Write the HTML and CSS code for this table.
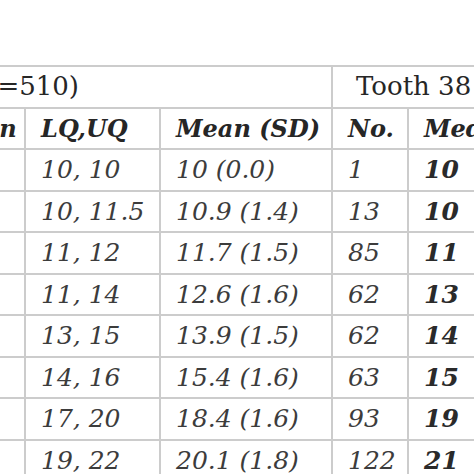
FILE: index.html
```html
<!DOCTYPE html>
<html lang="en">
<head>
<meta charset="utf-8">
<title>Tooth table</title>
<link rel="stylesheet" href="styles.css">
</head>
<body>
<div class="frame">
<table class="stats">
  <colgroup>
    <col class="c-med-l">
    <col class="c-lq">
    <col class="c-mean">
    <col class="c-no">
    <col class="c-med-r">
  </colgroup>
  <thead>
    <tr class="group">
      <th colspan="3" class="g-left">(n=510)</th>
      <th colspan="2" class="g-right">Tooth 38</th>
    </tr>
    <tr class="heads">
      <th class="h-first">Median</th>
      <th>LQ,UQ</th>
      <th>Mean (SD)</th>
      <th>No.</th>
      <th>Median</th>
    </tr>
  </thead>
  <tbody>
    <tr><td></td><td>10, 10</td><td>10 (0.0)</td><td>1</td><td class="b">10</td></tr>
    <tr><td></td><td>10, 11.5</td><td>10.9 (1.4)</td><td>13</td><td class="b">10</td></tr>
    <tr><td></td><td>11, 12</td><td>11.7 (1.5)</td><td>85</td><td class="b">11</td></tr>
    <tr><td></td><td>11, 14</td><td>12.6 (1.6)</td><td>62</td><td class="b">13</td></tr>
    <tr><td></td><td>13, 15</td><td>13.9 (1.5)</td><td>62</td><td class="b">14</td></tr>
    <tr><td></td><td>14, 16</td><td>15.4 (1.6)</td><td>63</td><td class="b">15</td></tr>
    <tr><td></td><td>17, 20</td><td>18.4 (1.6)</td><td>93</td><td class="b">19</td></tr>
    <tr><td></td><td>19, 22</td><td>20.1 (1.8)</td><td>122</td><td class="b">21</td></tr>
  </tbody>
</table>
</div>
</body>
</html>
```
FILE: styles.css
```css
html, body {
  margin: 0;
  padding: 0;
  background: #ffffff;
}
body {
  width: 474px;
  height: 474px;
  overflow: hidden;
}
.frame {
  padding-top: 65px;
  margin-left: -101px;
}
.stats {
  border-collapse: collapse;
  table-layout: fixed;
  width: 640px;
  font-family: "DejaVu Serif", "Liberation Serif", serif;
  font-size: 25px;
  color: #3c3c3c;
}
.c-med-l { width: 125px; }
.c-lq { width: 135px; }
.c-mean { width: 172px; }
.c-no { width: 76px; }
.c-med-r { width: 132px; }

.stats th, .stats td {
  border: 2px solid #cccccc;
  height: 41.5px;
  padding: 0 0 0 15px;
  text-align: left;
  vertical-align: middle;
  white-space: nowrap;
  box-sizing: border-box;
  line-height: 29px;
}
.stats td {
  font-style: italic;
  font-weight: normal;
}
.stats td.b {
  font-weight: bold;
  color: #2a2a2a;
}
.stats .group th {
  font-weight: normal;
  font-style: normal;
  font-size: 26px;
  color: #262626;
}
.stats .group th.g-left {
  text-align: right;
  padding-left: 0;
  padding-right: 252px;
}
.stats .group th.g-right {
  padding-left: 23px;
}
.stats .heads th {
  font-weight: bold;
  font-style: italic;
  font-size: 24px;
  color: #262626;
}
.stats .heads th.h-first {
  text-align: right;
  padding-right: 12px;
}
```
